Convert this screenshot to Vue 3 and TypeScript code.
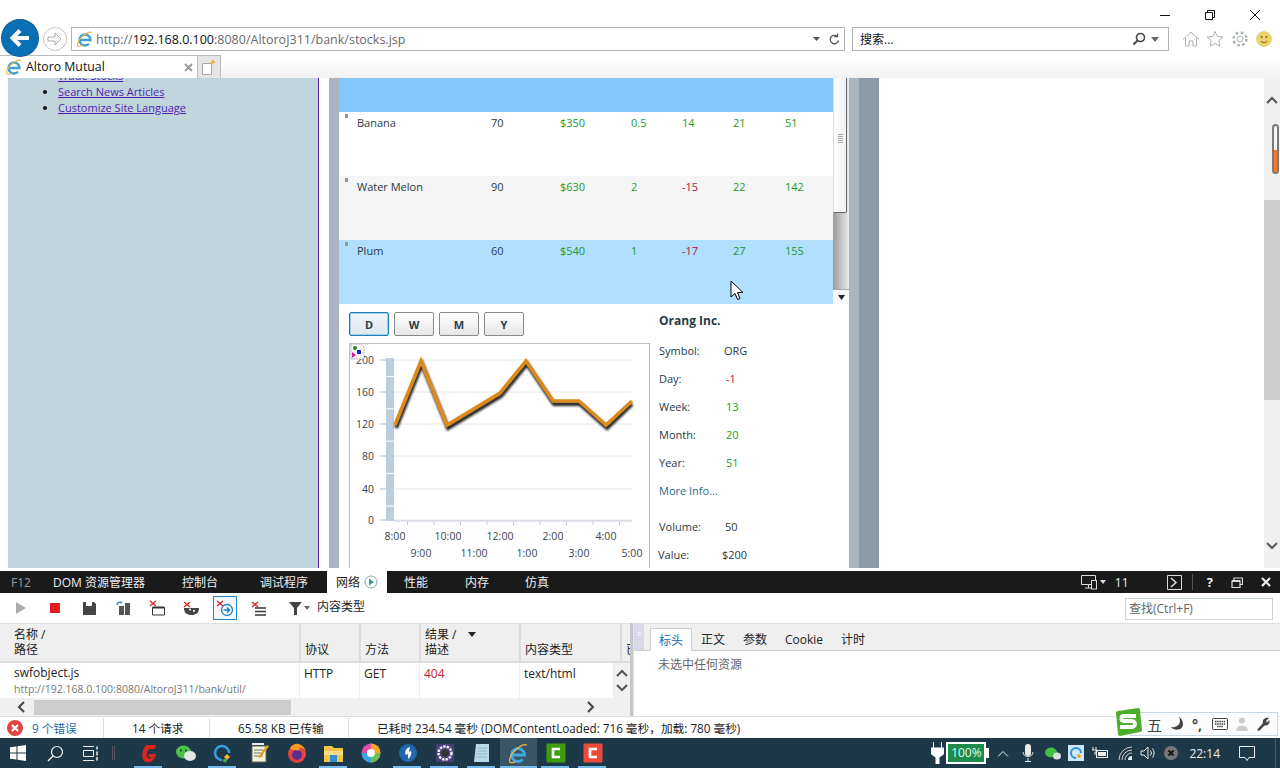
<script setup lang="ts">
interface Stock { name: string; qty: string; value: string; a: string; b: string; c: string; d: string; tone: string }
const stocks: Stock[] = [
  { name: 'Banana', qty: '70', value: '$350', a: '0.5', b: '14', c: '21', d: '51', tone: 'white' },
  { name: 'Water Melon', qty: '90', value: '$630', a: '2', b: '-15', c: '22', d: '142', tone: 'grey' },
  { name: 'Plum', qty: '60', value: '$540', a: '1', b: '-17', c: '27', d: '155', tone: 'blue' }
]
const isNeg = (v: string): boolean => v.startsWith('-')
const ranges: string[] = ['D', 'W', 'M', 'Y']
const facts = [
  { k: 'Symbol:', v: 'ORG', c: 'dark' },
  { k: 'Day:', v: '-1', c: 'neg' },
  { k: 'Week:', v: '13', c: 'pos' },
  { k: 'Month:', v: '20', c: 'pos' },
  { k: 'Year:', v: '51', c: 'pos' }
]
const yTicks = [
  { l: '200', y: 360 }, { l: '160', y: 392 }, { l: '120', y: 424 },
  { l: '80', y: 456 }, { l: '40', y: 489 }, { l: '0', y: 520 }
]
const xLabels = [
  { l: '8:00', x: 395, y: 540 }, { l: '9:00', x: 421, y: 557 }, { l: '10:00', x: 448, y: 540 },
  { l: '11:00', x: 474, y: 557 }, { l: '12:00', x: 500, y: 540 }, { l: '1:00', x: 527, y: 557 },
  { l: '2:00', x: 553, y: 540 }, { l: '3:00', x: 579, y: 557 }, { l: '4:00', x: 606, y: 540 },
  { l: '5:00', x: 632, y: 557 }
]
const linePts = '395,425 421,361 447,425 500,393 526,361 553,401 579,401 606,425 632,401'
const shadowPts = '396,428 422,364 448,428 501,396 527,364 554,404 580,404 607,428 632,404'
const tabs = [
  { t: 'DOM 资源管理器', w: 129 }, { t: '控制台', w: 78 }, { t: '调试程序', w: 67 }
]
const tabsAfter = [
  { t: '性能', w: 61 }, { t: '内存', w: 60 }, { t: '仿真', w: 60 }
]
</script>

<template>
  <div class="screen">
    <header class="browser">
      <div class="win-controls">
        <svg width="12" height="12" viewBox="0 0 12 12"><path d="M1 6.500h10" stroke="#111" fill="none"/></svg>
        <svg width="12" height="12" viewBox="0 0 12 12"><path d="M1.500 3.500h7v7h-7zM3.500 3.500v-2h7v7h-2" stroke="#111" fill="none"/></svg>
        <svg width="12" height="12" viewBox="0 0 12 12"><path d="M1 1l10 10M11 1L1 11" stroke="#111" fill="none"/></svg>
      </div>
      <div class="navrow">
        <button class="back">
          <svg width="26" height="26" viewBox="0 0 26 26"><path d="M22 13H6M13 5.500L5.500 13l7.500 7.500" stroke="#fff" stroke-width="4" fill="none"/></svg>
        </button>
        <button class="forward">
          <svg width="18" height="18" viewBox="0 0 18 18"><path d="M2 7h7V3l6 6-6 6v-4H2z" stroke="#a8a8a8" fill="none"/></svg>
        </button>
        <div class="address">
          <svg class="ie" width="18" height="18" viewBox="0 0 18 18"><path d="M4 10h10.500a5.500 5.500 0 1 0-1.500 3.800" fill="none" stroke="#3d9fdc" stroke-width="2.400"/><path d="M16 2.500C12 .5 3 8 1.500 14c-.5 3 3 2.500 5.500 1" stroke="#e9b93b" stroke-width="1.100" fill="none"/></svg>
          <span class="url"><i>http://</i><b>192.168.0.100</b><i>:8080/AltoroJ311/bank/stocks.jsp</i></span>
          <span class="addr-tools">
            <svg width="9" height="6" viewBox="0 0 9 6"><path d="M1 1h7L4.500 5z" fill="#555"/></svg>
            <svg width="13" height="13" viewBox="0 0 13 13"><path d="M10.500 7.500A4.200 4.200 0 1 1 9 3.200M9.500 0.500v3.200H6.300" stroke="#555" stroke-width="1.300" fill="none"/></svg>
          </span>
        </div>
        <div class="search">
          <span>搜索...</span>
          <span class="search-tools">
            <svg width="14" height="14" viewBox="0 0 14 14"><circle cx="8.500" cy="5.500" r="4" stroke="#444" stroke-width="1.600" fill="none"/><path d="M5.500 8.500L1.500 12.500" stroke="#444" stroke-width="2"/></svg>
            <svg width="8" height="5" viewBox="0 0 8 5"><path d="M0 0h8L4 5z" fill="#666"/></svg>
          </span>
        </div>
        <div class="ie-tools">
          <svg width="18" height="18" viewBox="0 0 18 18"><path d="M1 9.500L9 2l8 7.500M3.500 8v8h3.500v-5h4v5h3.500V8" stroke="#aab0b4" fill="none"/></svg>
          <svg width="18" height="18" viewBox="0 0 18 18"><path d="M9 1.500l2.300 5 5.500.6-4 3.700 1.100 5.400L9 13.500l-4.900 2.700 1.100-5.400-4-3.700 5.500-.6z" stroke="#aab0b4" fill="none"/></svg>
          <svg class="gear" width="18" height="18" viewBox="0 0 18 18"><circle cx="9" cy="9" r="3" stroke="#aab0b4" fill="none"/><circle cx="9" cy="9" r="6.500" stroke="#aab0b4" fill="none" stroke-width="2.400" stroke-dasharray="2.600 2.500"/></svg>
          <svg class="smile" width="16" height="16" viewBox="0 0 16 16"><circle cx="8" cy="8" r="7.500" fill="#eed36a" stroke="#d5ba52" stroke-width=".5"/><circle cx="5.500" cy="6" r="1" fill="#7a6a20"/><circle cx="10.500" cy="6" r="1" fill="#7a6a20"/><path d="M4.500 10c1.500 2 5.500 2 7 0" stroke="#7a6a20" fill="none"/></svg>
        </div>
      </div>
      <div class="tabrow">
        <div class="tab">
          <svg width="18" height="18" viewBox="0 0 18 18"><path d="M4 10h10.500a5.500 5.500 0 1 0-1.500 3.800" fill="none" stroke="#3d9fdc" stroke-width="2.400"/><path d="M16 2.500C12 .5 3 8 1.500 14c-.5 3 3 2.500 5.500 1" stroke="#e9b93b" stroke-width="1.100" fill="none"/></svg>
          <span class="tab-title">Altoro Mutual</span>
          <svg class="tab-close" width="9" height="9" viewBox="0 0 9 9"><path d="M1 1l7 7M8 1L1 8" stroke="#999" stroke-width="1.800"/></svg>
        </div>
        <div class="newtab">
          <svg width="16" height="17" viewBox="0 0 16 17"><path d="M1.500 4.500h9v11h-9z" fill="#fff" stroke="#aaa"/><path d="M12 0l.9 2.100L15 3l-2.100.9L12 6l-.9-2.100L9 3l2.100-.9z" fill="#f3b33b"/></svg>
        </div>
      </div>
    </header>

    <main class="page">
      <div class="page-left-margin"></div>
      <aside class="sidebar">
        <ul>
          <li><a>Trade Stocks</a></li>
          <li><a>Search News Articles</a></li>
          <li><a>Customize Site Language</a></li>
        </ul>
      </aside>
      <div class="gap"></div>
      <div class="gutter"></div>
      <section class="content">
        <div class="grid-wrap">
          <div class="stock-table">
            <div class="head-band"></div>
            <div v-for="s in stocks" :key="s.name" class="stock-row" :class="s.tone">
              <span class="bullet"></span>
              <span class="nm">{{ s.name }}</span>
              <span class="nm">{{ s.qty }}</span>
              <span class="pos">{{ s.value }}</span>
              <span class="pos">{{ s.a }}</span>
              <span :class="isNeg(s.b) ? 'neg' : 'pos'">{{ s.b }}</span>
              <span class="pos">{{ s.c }}</span>
              <span class="pos">{{ s.d }}</span>
            </div>
          </div>
          <div class="inner-scroll">
            <div class="inner-thumb"><i></i></div>
            <div class="inner-track"></div>
            <div class="inner-down"><svg width="7" height="5" viewBox="0 0 7 5"><path d="M0 0h7L3.500 5z" fill="#222"/></svg></div>
          </div>
          <svg class="cursor" width="14" height="21" viewBox="0 0 14 21"><path d="M1 1v16l4-3.500 2.500 6 2.500-1-2.500-6H13z" fill="#fff" stroke="#000"/></svg>
        </div>
        <div class="detail">
          <div class="chart-col">
            <div class="ranges">
              <button v-for="(r, i) in ranges" :key="r" class="range" :class="{ active: i === 0 }">{{ r }}</button>
            </div>
            <div class="chart-box">
              <svg class="chart" width="300" height="226" viewBox="350 344 300 226">
                <defs><filter id="soft" x="-5%" y="-10%" width="110%" height="120%"><feGaussianBlur stdDeviation="0.900"/></filter></defs>
                <line v-for="t in yTicks" :key="t.l" x1="386" x2="632" :y1="t.y" :y2="t.y" stroke="#e6e8ea"/>
                <line v-for="t in yTicks" :key="'m' + t.l" x1="380" x2="387" :y1="t.y" :y2="t.y" stroke="#aeb4c8"/>
                <rect x="386" y="358" width="8" height="163" fill="#bccddf"/>
                <line v-for="n in 6" :key="'w' + n" x1="386" x2="394" :y1="344 + n * 32.400" :y2="344 + n * 32.400" stroke="#fff"/>
                <line x1="394" x2="632" y1="521" y2="521" stroke="#c6c9dc"/>
                <line v-for="n in 9" :key="'x' + n" :x1="381 + n * 26.500" :x2="381 + n * 26.500" y1="521" y2="525" stroke="#c6c9dc"/>
                <polyline :points="shadowPts" fill="none" stroke="#222" stroke-width="4" filter="url(#soft)"/>
                <polyline :points="linePts" fill="none" stroke="#de8a1a" stroke-width="3.600"/>
                <text v-for="t in yTicks" :key="'l' + t.l" x="374" :y="t.y + 3.500" text-anchor="end" class="ct">{{ t.l }}</text>
                <text v-for="t in xLabels" :key="t.l" :x="t.x" :y="t.y" text-anchor="middle" class="ct">{{ t.l }}</text>
                <path d="M351 344h10l3 3v12h-13z" fill="#fff" stroke="#555" stroke-width=".6" stroke-dasharray="1 .6"/>
                <circle cx="355" cy="348" r="2" fill="#1a8a2c"/>
                <rect x="357" y="350" width="4" height="4" fill="#2222cc"/>
                <path d="M352 352l4 3-4 3z" fill="#e0189a"/>
              </svg>
            </div>
          </div>
          <div class="facts">
            <h3>Orang Inc.</h3>
            <div v-for="f in facts" :key="f.k" class="fact">
              <span class="fk">{{ f.k }}</span><span :class="f.c">{{ f.v }}</span>
            </div>
            <a class="more">More Info...</a>
            <div class="fact vol"><span class="fk2">Volume:</span><span class="dark">50</span></div>
            <div class="fact val"><span class="fk3">Value:</span><span class="dark">$200</span></div>
          </div>
        </div>
      </section>
      <div class="gutter"></div>
      <div class="gutter deep"></div>
      <div class="blank"></div>
      <div class="page-scroll">
        <svg class="chev" width="12" height="8" viewBox="0 0 12 8"><path d="M1 7l5-5 5 5" stroke="#555" stroke-width="2" fill="none"/></svg>
        <div class="mini"><i></i></div>
        <div class="page-thumb"></div>
        <svg class="chev low" width="12" height="8" viewBox="0 0 12 8"><path d="M1 1l5 5 5-5" stroke="#555" stroke-width="2" fill="none"/></svg>
      </div>
    </main>

    <section class="devtools">
      <div class="dt-top">
        <span class="f12">F12</span>
        <span v-for="t in tabs" :key="t.t" class="dt-tab" :style="{ width: t.w + 'px' }">{{ t.t }}</span>
        <span class="dt-active">网络
          <svg width="14" height="14" viewBox="0 0 14 14"><circle cx="7" cy="7" r="6" fill="#fff" stroke="#8aa"/><path d="M5 3.500l5 3.500-5 3.500z" fill="#2aa198"/></svg>
        </span>
        <span v-for="t in tabsAfter" :key="t.t" class="dt-tab" :style="{ width: t.w + 'px' }">{{ t.t }}</span>
        <span class="dt-right">
          <svg width="20" height="16" viewBox="0 0 20 16"><path d="M1.500 1.500h14v9h-14zM5 14h7M8.500 11v3" stroke="#ddd" fill="none"/><rect x="11.500" y="6.500" width="5" height="8.500" fill="#1a1a1a" stroke="#ddd"/></svg>
          <svg width="6" height="4" viewBox="0 0 6 4"><path d="M0 0h6L3 4z" fill="#ddd"/></svg>
          <span class="dt-num">11</span>
          <svg class="ico-prompt" width="15" height="15" viewBox="0 0 15 15"><path d="M.5.500h14v14H.5z" stroke="#ddd" fill="none"/><path d="M4 3l5 4.500L4 12" stroke="#ddd" stroke-width="1.500" fill="none"/></svg>
          <i class="dt-sep"></i>
          <b class="dt-q">?</b>
          <svg width="12" height="11" viewBox="0 0 12 11"><path d="M1 4h8v6.500H1zM3 3.500V1h8.500v6.500H9.500" stroke="#ddd" stroke-width="1.200" fill="none"/><path d="M1 4h8" stroke="#ddd" stroke-width="2"/></svg>
          <svg class="ico-x" width="10" height="10" viewBox="0 0 10 10"><path d="M1 1l8 8M9 1l-8 8" stroke="#eee" stroke-width="2.200"/></svg>
        </span>
      </div>
      <div class="dt-bar">
        <span class="tb"><svg width="12" height="14" viewBox="0 0 12 14"><path d="M1 1l10 6-10 6z" fill="#aaa"/></svg></span>
        <span class="tb"><svg width="10" height="10" viewBox="0 0 10 10"><rect width="10" height="10" fill="#e51c23"/></svg></span>
        <span class="tb"><svg width="13" height="13" viewBox="0 0 13 13"><path d="M0 0h3v4h6V0h2l2 2v11H0z" fill="#444"/></svg></span>
        <span class="tb"><svg width="16" height="16" viewBox="0 0 16 16"><path d="M2 5a3 3 0 0 1 5-2" stroke="#2a7ab8" stroke-width="1.400" fill="none"/><rect x="4" y="6" width="5" height="9" fill="#555"/><rect x="10" y="3" width="5" height="12" fill="#555"/></svg></span>
        <span class="tb"><svg width="16" height="16" viewBox="0 0 16 16"><path d="M3.500 7.500h12v7.500h-12z" stroke="#333" fill="none"/><path d="M3.500 7.500h12" stroke="#333" stroke-width="2"/><path d="M1 1l6 5M7 1L1 6" stroke="#d22" stroke-width="1.400"/></svg></span>
        <span class="tb"><svg width="17" height="15" viewBox="0 0 17 15"><path d="M1 7h15c0 5-3 7-7.500 7S1 12 1 7z" fill="#444"/><circle cx="7" cy="8.500" r="1" fill="#fff"/><circle cx="11" cy="10" r="1" fill="#fff"/><path d="M1 1l6 5M7 1L1 6" stroke="#d22" stroke-width="1.400"/></svg></span>
        <span class="tb on"><svg width="18" height="17" viewBox="0 0 18 17"><circle cx="11" cy="10" r="5.500" stroke="#1e7fc0" stroke-width="1.300" fill="none"/><path d="M7.500 10h6M11 7.500l2.500 2.500-2.500 2.500" stroke="#1e7fc0" stroke-width="1.400" fill="none"/><path d="M1 1l6 5M7 1L1 6" stroke="#d22" stroke-width="1.400"/></svg></span>
        <span class="tb"><svg width="16" height="15" viewBox="0 0 16 15"><path d="M4 7h11M4 10.500h11M4 14h11" stroke="#333" stroke-width="1.400"/><path d="M1 1l6 5M7 1L1 6" stroke="#d22" stroke-width="1.400"/></svg></span>
        <span class="filter">
          <svg width="13" height="13" viewBox="0 0 13 13"><path d="M0 0h13L8 6v7H5V6z" fill="#444"/></svg>
          <svg width="6" height="4" viewBox="0 0 6 4"><path d="M0 0h6L3 4z" fill="#666"/></svg>
        </span>
        <span class="ctype">内容类型</span>
        <span class="find">查找(Ctrl+F)</span>
      </div>
      <div class="dt-split">
        <div class="dt-left">
          <div class="hdr">
            <span class="h h1">名称 /<br>路径</span>
            <span class="h h2">协议</span>
            <span class="h h3">方法</span>
            <span class="h h4">结果 / <svg class="sort" width="8" height="5" viewBox="0 0 8 5"><path d="M0 0h8L4 5z" fill="#222"/></svg><br>描述</span>
            <span class="h h5">内容类型</span>
            <span class="h h6">已</span>
          </div>
          <div class="body-row">
            <div class="req">
              <span class="c1"><span class="fname">swfobject.js</span><span class="path">http://192.168.0.100:8080/AltoroJ311/bank/util/</span></span>
              <span class="c2">HTTP</span>
              <span class="c3">GET</span>
              <span class="c4">404</span>
              <span class="c5">text/html</span>
            </div>
            <div class="v-scroll">
              <svg width="12" height="8" viewBox="0 0 12 8"><path d="M1 7l5-5 5 5" stroke="#555" stroke-width="2" fill="none"/></svg>
              <svg width="12" height="8" viewBox="0 0 12 8"><path d="M1 1l5 5 5-5" stroke="#555" stroke-width="2" fill="none"/></svg>
            </div>
          </div>
          <div class="h-scroll">
            <svg class="ha" width="8" height="12" viewBox="0 0 8 12"><path d="M7 1L2 6l5 5" stroke="#444" stroke-width="2" fill="none"/></svg>
            <div class="h-thumb"></div>
            <svg class="hb" width="8" height="12" viewBox="0 0 8 12"><path d="M1 1l5 5-5 5" stroke="#444" stroke-width="2" fill="none"/></svg>
          </div>
        </div>
        <div class="splitter"></div>
        <div class="dt-right-pane">
          <div class="pane-tabs">
            <span class="collapse">&gt;</span>
            <span class="ptab act">标头</span>
            <span class="ptab p2">正文</span>
            <span class="ptab p3">参数</span>
            <span class="ptab p4">Cookie</span>
            <span class="ptab p5">计时</span>
          </div>
          <div class="none">未选中任何资源</div>
        </div>
      </div>
      <div class="status">
        <span class="st s1">
          <svg width="16" height="16" viewBox="0 0 16 16"><circle cx="8" cy="8" r="8" fill="#e04444"/><path d="M5 5l6 6M11 5l-6 6" stroke="#fff" stroke-width="2.200"/></svg>
          <em>9 个错误</em>
        </span>
        <span class="st s2">14 个请求</span>
        <span class="st s3">65.58 KB 已传输</span>
        <span class="st s4">已耗时 234.54 毫秒 (DOMContentLoaded: 716 毫秒，加载: 780 毫秒)</span>
      </div>
      <div class="ime">
        <svg class="ime-logo" width="28" height="28" viewBox="0 0 28 28"><path d="M2 5Q2 3 4 3L24 0Q26 0 26 2L28 22Q28 24 26 24L6 28Q4 28 4 26z" fill="#4caf2c"/><path d="M22 8H10c-3.500 0-3.500 5 0 5h8c4 0 4 6 0 6H6" stroke="#fff" stroke-width="3.800" fill="none"/></svg>
        <span class="ime-w">五</span>
        <svg width="14" height="14" viewBox="0 0 14 14"><path d="M9 0c3 6-1 11-8 10 3 4 12 4 12-3 0-3-2-6-4-7z" fill="#444"/></svg>
        <span class="ime-p">°,</span>
        <svg width="16" height="12" viewBox="0 0 16 12"><rect x=".5" y=".5" width="15" height="11" rx="1" fill="none" stroke="#444"/><path d="M3 3.500h10M3 6h10M5 8.500h6" stroke="#444" stroke-width="1.500" stroke-dasharray="1.500 .7"/></svg>
        <svg width="12" height="14" viewBox="0 0 12 14"><circle cx="6" cy="3.500" r="3" fill="#ccc"/><path d="M0 14c0-7 12-7 12 0z" fill="#ccc"/></svg>
        <svg width="14" height="14" viewBox="0 0 14 14"><path d="M1 13l6-7c-1-3 2-6 6-5L10 4l1 1.500L13.500 3c.5 4-2 6-5 5.500L3 14z" fill="#444"/></svg>
      </div>
    </section>

    <footer class="taskbar">
      <span class="tk w-start"><svg width="16" height="16" viewBox="0 0 16 16"><path d="M0 2.300L6.500 1.400V7.500H0zM7.500 1.200L16 0v7.500H7.500zM0 8.500h6.500v6.100L0 13.700zM7.500 8.500H16V16l-8.500-1.200z" fill="#fff"/></svg></span>
      <span class="tk w-search"><svg width="17" height="17" viewBox="0 0 17 17"><circle cx="10" cy="7" r="5.500" stroke="#fff" stroke-width="1.200" fill="none"/><path d="M6 11l-5 5" stroke="#fff" stroke-width="1.400"/></svg></span>
      <span class="tk w-view"><svg width="18" height="15" viewBox="0 0 18 15"><path d="M1 .5h11M1 14.500h11M1.500 4.500h10v6h-10z" stroke="#eee" fill="none"/><path d="M15 .500v3M15 5.500v4M15 11v3.500" stroke="#eee" stroke-width="1.500"/></svg></span>
      <i class="tk-sep"></i>
      <span class="app run"><svg width="18" height="20" viewBox="0 0 18 20"><path d="M16 2H7C2 5 1 15 4 18c4 3 11 1 12-7H9l-1 3h3c-1 2-3 2-4 0-1-3 1-8 3-8h5z" fill="#d8251d"/></svg></span>
      <span class="app"><svg width="20" height="17" viewBox="0 0 20 17"><ellipse cx="7.500" cy="7" rx="7.500" ry="6.500" fill="#4cc24b"/><ellipse cx="14" cy="11" rx="6" ry="5" fill="#e5e5e5"/><circle cx="5" cy="5.500" r="1" fill="#134"/><circle cx="10" cy="5.500" r="1" fill="#134"/></svg></span>
      <span class="app run"><svg width="19" height="19" viewBox="0 0 19 19"><path d="M9 2a7 7 0 1 0 0 14" stroke="#34a0e0" stroke-width="2.600" fill="none"/><path d="M9 2a7 7 0 0 1 7 7" stroke="#34a0e0" stroke-width="2.600" fill="none"/><path d="M11 13l3-3 3 3-3 3z" fill="#f1b82d"/><circle cx="12" cy="16.500" r="2" fill="#4aa94a"/></svg></span>
      <span class="app"><svg width="18" height="20" viewBox="0 0 18 20"><rect x="1" y="3" width="14" height="16" fill="#f3f3d8" stroke="#666"/><path d="M3 7h9M3 10h7M3 13h9" stroke="#777"/><path d="M7 14L16 2l2 1.500L9 15z" fill="#e2a128"/><path d="M1 1h12" stroke="#eee" stroke-width="2"/></svg></span>
      <span class="app"><svg width="20" height="20" viewBox="0 0 20 20"><circle cx="10" cy="11" r="9" fill="#e6433e"/><circle cx="10" cy="12" r="5" fill="#5a2c8c"/><path d="M3 5c2-3 5-5 9-4 3 1 6 4 7 7-2-3-5-4-7-3 2 2 0 3-4 2-2 0-4 0-5-2z" fill="#fa9a22"/></svg></span>
      <span class="app run"><svg width="19" height="17" viewBox="0 0 19 17"><path d="M0 1h8l2 2h9v14H0z" fill="#f4c445"/><path d="M0 6h19v4H0z" fill="#f9dc83"/><rect x="6" y="10" width="7" height="7" fill="#2d8ed1"/></svg></span>
      <span class="app"><svg width="20" height="20" viewBox="0 0 20 20"><circle cx="10" cy="10" r="9.500" fill="#e34ba8"/><path d="M10 .500a9.500 9.500 0 0 1 9.500 9.500H10z" fill="#f5a623"/><path d="M19.500 10A9.500 9.500 0 0 1 10 19.500V10z" fill="#6bc04b"/><path d="M10 19.500A9.500 9.500 0 0 1 .5 10H10z" fill="#3aa6e0"/><circle cx="10" cy="10" r="4" fill="#fff"/></svg></span>
      <span class="app run"><svg width="18" height="18" viewBox="0 0 18 18"><circle cx="9" cy="9" r="9" fill="#2068b0"/><path d="M11 3C7 4 5 8 7 11l2-1v5c3-2 4-6 3-8l-2 1z" fill="#fff"/></svg></span>
      <span class="app run"><svg width="20" height="20" viewBox="0 0 20 20"><rect x="1" y="1" width="18" height="18" fill="#4a3e78"/><circle cx="10" cy="10" r="6.500" fill="none" stroke="#eee" stroke-width="2.500" stroke-dasharray="2.500 1"/><circle cx="10" cy="10" r="3.500" fill="#333"/></svg></span>
      <span class="app run"><svg width="17" height="20" viewBox="0 0 17 20"><path d="M3 1h13v18H1z" fill="#b9d8e8"/><path d="M5 5h9M5 8h9M4 11h10M4 14h10" stroke="#8fb6cd"/></svg></span>
      <span class="app run active"><svg width="21" height="21" viewBox="0 0 21 21"><path d="M4 12h12.500a6.500 6.500 0 1 0-1.800 4.500" fill="none" stroke="#3fa9e8" stroke-width="2.800"/><path d="M19 2C14 0 3 9 1.500 17c-.5 3.500 3.500 3 6 1.500" stroke="#efbe3e" stroke-width="1.200" fill="none"/></svg></span>
      <span class="app run"><svg width="20" height="20" viewBox="0 0 20 20"><rect x=".5" y=".5" width="19" height="19" fill="#3f9d10"/><path d="M14 6H7v8h7" stroke="#fff" stroke-width="2.600" fill="none"/></svg></span>
      <span class="app run"><svg width="20" height="20" viewBox="0 0 20 20"><rect x=".5" y=".5" width="19" height="19" rx="1" fill="#ee4a3a"/><path d="M14 6H7v8h7" stroke="#fff" stroke-width="2.600" fill="none"/></svg></span>

      <span class="tray">
        <svg class="plug" width="13" height="22" viewBox="0 0 13 22"><path d="M2.500 0v7M10.500 0v7M0 6h13v4c0 3-3 4-5 5v7H5v-7c-2-1-5-2-5-5z" fill="#fff" stroke="#fff"/></svg>
        <span class="battery">100%</span>
        <span class="batcap"></span>
        <svg class="t1" width="12" height="7" viewBox="0 0 12 7"><path d="M1 6.500l5-5 5 5" stroke="#eee" fill="none"/></svg>
        <svg class="t2" width="12" height="18" viewBox="0 0 12 18"><rect x="3" y="0" width="6" height="12" rx="3" fill="#e8e8e8"/><path d="M1 8c0 6 10 6 10 0M6 14v3M3 17.500h6" stroke="#e8e8e8" fill="none"/></svg>
        <svg class="t3" width="16" height="13" viewBox="0 0 16 13"><ellipse cx="6" cy="5.500" rx="6" ry="5" fill="#3fc03f"/><ellipse cx="12" cy="9" rx="4" ry="3.500" fill="#ddd"/></svg>
        <svg class="t4" width="16" height="16" viewBox="0 0 16 16"><rect width="16" height="16" fill="#cfe8fb"/><path d="M8 3a5 5 0 1 0 0 10" stroke="#2e8fdc" stroke-width="2" fill="none"/><path d="M8 3a5 5 0 0 1 5 5" stroke="#2e8fdc" stroke-width="2" fill="none"/><circle cx="11" cy="11" r="2" fill="#eea92a"/></svg>
        <svg class="t5" width="16" height="12" viewBox="0 0 16 12"><rect x="4.500" y="3.500" width="11" height="7" fill="none" stroke="#eee"/><rect x="6" y="5" width="8" height="4" fill="#eee"/><path d="M1 0v3M4 0v3M0 3h5v2H3v3" stroke="#eee" fill="none"/></svg>
        <svg class="t6" width="14" height="14" viewBox="0 0 14 14"><path d="M1 14A13 13 0 0 1 14 1M4 14A10 10 0 0 1 14 4M7 14A7 7 0 0 1 14 7" stroke="#ccc" fill="none"/><path d="M10 14a4 4 0 0 1 4-4v4z" fill="#eee"/></svg>
        <svg class="t7" width="16" height="14" viewBox="0 0 16 14"><path d="M1 5h3l4-4v12L4 9H1z" stroke="#eee" fill="none"/><path d="M10.500 4.500a4 4 0 0 1 0 5M12.500 2.500a7 7 0 0 1 0 9" stroke="#eee" fill="none"/></svg>
        <svg class="t8" width="14" height="14" viewBox="0 0 14 14"><circle cx="7" cy="7" r="7" fill="#777"/><path d="M4.500 4.500l5 5M9.500 4.500l-5 5" stroke="#111" stroke-width="1.800"/></svg>
        <span class="clock">22:14</span>
        <svg class="t9" width="16" height="15" viewBox="0 0 16 15"><path d="M.5.500h15v11H10l-2 3-2-3H.5z" stroke="#eee" fill="none"/></svg>
        <i class="desk"></i>
      </span>
    </footer>
  </div>
</template>

<style>
html, body { margin: 0; overflow: hidden; background: #fff; }
</style>

<style scoped>
.screen { width: 1280px; height: 768px; display: flex; flex-direction: column; overflow: hidden; font-family: "Open Sans", "Noto Sans CJK SC", sans-serif; position: relative; color: #222; }
button { font-family: inherit; padding: 0; }

.browser { height: 78px; flex: none; background: linear-gradient(#fff 58px, #fff 60px, #f1f1f1 78px); position: relative; z-index: 2; }
.win-controls { height: 27px; display: flex; justify-content: flex-end; align-items: center; gap: 33px; padding-right: 19px; box-sizing: border-box; }
.win-controls svg { position: relative; top: 1px; }
.navrow { height: 24px; display: flex; align-items: center; position: relative; }
.back { position: absolute; left: 2px; top: -7px; width: 36px; height: 36px; border-radius: 50%; border: 0; background: #0a70b5; display: flex; align-items: center; justify-content: center; box-shadow: 0 0 0 1px #075a95; z-index: 2; }
.forward { position: absolute; left: 43px; top: 0; width: 24px; height: 24px; border: 1px solid #c4c4c4; background: #fff; border-radius: 50%; display: flex; align-items: center; justify-content: center; box-sizing: border-box; }
.address { margin-left: 71px; width: 774px; height: 24px; box-sizing: border-box; border: 1px solid #b3b3b3; display: flex; align-items: center; padding: 0 3px 0 4px; background: #fff; }
.ie { margin-right: 2px; flex: none; }
.url { font-size: 12.500px; white-space: nowrap; flex: 1; }
.url i { font-style: normal; color: #6a6a6a; }
.url b { font-weight: 400; color: #111; }
.addr-tools { display: flex; gap: 7px; align-items: center; }
.search { margin-left: 7px; width: 317px; height: 24px; box-sizing: border-box; border: 1px solid #b3b3b3; display: flex; align-items: center; justify-content: space-between; padding: 0 9px 0 7px; font-size: 12px; color: #111; background: #fff; }
.search-tools { display: flex; gap: 5px; align-items: center; }
.ie-tools { margin-left: 13px; display: flex; gap: 6px; align-items: center; }
.gear { margin-left: 1px; }
.smile { margin-left: 1px; }
.tabrow { display: flex; margin-top: 4px; height: 23px; }
.tab { width: 198px; height: 23px; box-sizing: border-box; background: #fff; border-top: 1px solid #bbb; border-right: 1px solid #bbb; display: flex; align-items: center; padding-left: 5px; position: relative; }
.tab-title { margin-left: 3px; font-size: 12.300px; color: #111; position: relative; top: -1px; }
.tab-close { margin-left: auto; margin-right: 4px; }
.newtab { width: 22px; height: 22px; background: #e6e6e6; border-top: 1px solid #bbb; border-right: 1px solid #bbb; display: flex; align-items: center; justify-content: center; }

.page { flex: none; height: 490px; display: flex; background: #fff; overflow: hidden; position: relative; }
.page-left-margin { width: 8px; flex: none; }
.sidebar { width: 310px; flex: none; background: #bfd4db; border-right: 1px solid #4b1f9a; overflow: hidden; }
.sidebar ul { margin: -10px 0 0; padding: 0 0 0 50px; font-size: 11px; line-height: 16px; }
.sidebar li { color: #111; }
.sidebar a { color: #4f1fae; text-decoration: underline; }
.gap { width: 10px; flex: none; }
.gutter { width: 10px; flex: none; background: #a9b5c0; }
.gutter.deep { width: 20px; background: #8a9aa8; }
.content { width: 510px; flex: none; display: flex; flex-direction: column; }
.grid-wrap { height: 226px; display: flex; flex: none; position: relative; }
.stock-table { width: 494px; flex: none; font-size: 11px; }
.head-band { height: 34px; background: #80c8ff; }
.stock-row { height: 64px; display: grid; grid-template-columns: 134px 69px 71px 51px 51px 52px 40px; padding: 3px 0 0 18px; box-sizing: border-box; line-height: 16px; position: relative; }
.stock-row.grey { background: #f5f5f5; }
.stock-row.blue { background: #b0dfff; }
.bullet { position: absolute; left: 6px; top: 2px; width: 3px; height: 4px; background: #8c98a0; }
.nm { color: #2a3a44; }
.pos { color: #1d9a2e; }
.neg { color: #b5123a; }
.dark { color: #2a3a44; }
.inner-scroll { width: 16px; flex: none; display: flex; flex-direction: column; background: linear-gradient(90deg, #9a9a9a, #ececec); }
.inner-thumb { height: 135px; box-sizing: border-box; background: linear-gradient(90deg, #fdfdfd, #f0f0f0); border-right: 1px solid #666; border-bottom: 1px solid #666; border-left: 1px solid #ddd; border-radius: 0 0 2px 2px; margin-right: 2px; display: flex; align-items: center; justify-content: center; }
.inner-thumb i { width: 5px; height: 10px; background: repeating-linear-gradient(#aaa 0 1px, transparent 1px 2px); position: relative; top: -6px; }
.inner-track { flex: 1; }
.inner-down { height: 15px; background: #f8f8f8; border-top: 1px solid #aaa; display: flex; align-items: center; justify-content: center; box-sizing: border-box; }
.cursor { position: absolute; left: 391px; top: 202px; }
.detail { flex: 1; display: flex; min-height: 0; }
.chart-col { width: 320px; flex: none; padding: 8px 0 0 10px; box-sizing: border-box; }
.ranges { display: flex; gap: 5px; height: 24px; margin-bottom: 7px; }
.range { width: 40px; height: 24px; border: 1px solid #8a8a8a; border-radius: 2px; background: linear-gradient(#fff, #e6e6e6); font-size: 11px; font-weight: 700; color: #2f3d48; }
.range.active { border: 1px solid #1d80b8; box-shadow: inset 0 0 0 1px #9dd0ee; background: linear-gradient(#eef6fb, #dfe8ee); }
.chart-box { width: 301px; height: 240px; box-sizing: border-box; border: 1px solid #bdbdbd; overflow: hidden; }
.chart { display: block; }
.ct { font-family: "Open Sans", sans-serif; font-size: 10.500px; fill: #3a4650; }
.facts { flex: 1; font-size: 11px; color: #2a3a44; }
.facts h3 { margin: 9px 0 0; font-size: 12px; line-height: 16px; font-weight: 700; color: #2a3a44; }
.fact { display: flex; height: 28px; align-items: center; }
.facts h3 + .fact { margin-top: 7px; }
.fk { width: 67px; }
.fact:first-of-type .fk { width: 65px; }
.fk2 { width: 66px; }
.fk3 { width: 64px; margin-left: -1px; }
.more { display: block; height: 28px; line-height: 30px; color: #1a6a8c; }
.vol { margin-top: 8px; }

.blank { flex: 1; }
.page-scroll { width: 16px; flex: none; background: #f0f0f0; display: flex; flex-direction: column; align-items: center; position: relative; }
.chev { position: absolute; top: 18px; left: 2px; }
.chev.low { top: 464px; }
.mini { position: absolute; left: 8px; top: 46px; width: 7px; height: 50px; box-sizing: border-box; border: 2px solid #7a7a7a; border-radius: 4px; background: #f6f6f6; display: flex; align-items: flex-end; justify-content: center; }
.mini i { width: 3px; height: 22px; background: #ee7b2d; }
.page-thumb { position: absolute; left: 0; top: 122px; width: 16px; height: 200px; background: #cdcdcd; }

.devtools { flex: none; height: 170px; display: flex; flex-direction: column; background: #fff; position: relative; }
.dt-top { margin-top: 3px; height: 22px; flex: none; background: #1a1a1a; display: flex; align-items: center; color: #eee; font-size: 12px; }
.f12 { color: #999; padding-left: 11px; width: 53px; box-sizing: border-box; flex: none; }
.dt-tab { display: inline-block; white-space: nowrap; flex: none; }
.dt-active { width: 60px; height: 22px; box-sizing: border-box; background: #fff; color: #222; display: flex; align-items: center; gap: 4px; padding-left: 9px; margin-right: 17px; flex: none; }
.dt-right { margin-left: auto; display: flex; align-items: center; padding-right: 9px; }
.dt-num { margin-left: 9px; width: 52px; }
.ico-prompt { margin-right: 10px; }
.dt-sep { width: 1px; height: 16px; background: #555; margin-right: 14px; }
.dt-q { font-size: 13px; margin-right: 18px; }
.ico-x { margin-left: 18px; }
.dt-bar { height: 30px; flex: none; display: flex; align-items: center; padding-left: 4px; box-sizing: border-box; }
.tb { width: 34px; height: 24px; display: flex; align-items: center; justify-content: center; box-sizing: border-box; flex: none; }
.tb.on { border: 1px solid #2a86c8; width: 24px; margin: 0 5px; background: #f2f8fc; }
.filter { margin-left: 13px; display: flex; align-items: center; gap: 2px; width: 28px; flex: none; }
.ctype { font-size: 12px; position: relative; top: -2px; }
.find { margin-left: auto; margin-right: 7px; width: 148px; height: 22px; box-sizing: border-box; border: 1px solid #c8d4dc; font-size: 12px; color: #666; line-height: 20px; padding-left: 3px; position: relative; top: 1px; }
.dt-split { height: 93px; flex: none; display: flex; }
.dt-left { width: 630px; flex: none; display: flex; flex-direction: column; overflow: hidden; }
.hdr { height: 40px; flex: none; background: #efefef; border-top: 1px solid #ddd; border-bottom: 2px solid #ddd; box-sizing: border-box; display: flex; font-size: 12px; line-height: 15px; }
.h { display: block; box-sizing: border-box; padding: 3px 0 0 4px; border-right: 2px solid #ddd; white-space: nowrap; flex: none; }
.h1 { width: 301px; padding-left: 14px; }
.h2, .h3 { width: 60px; padding-top: 18px; }
.h4 { width: 100px; }
.sort { margin-left: 8px; position: relative; top: -2px; }
.h5 { width: 101px; padding-top: 18px; }
.h6 { width: 10px; border: 0; padding-top: 18px; overflow: hidden; }
.body-row { height: 35px; flex: none; display: flex; }
.req { width: 613px; flex: none; display: flex; font-size: 12px; color: #222; }
.req > span { box-sizing: border-box; padding: 2px 0 0 4px; border-right: 1px solid #eee; }
.c1 { width: 300px; display: flex; flex-direction: column; padding-left: 14px !important; }
.fname { line-height: 16px; }
.path { font-size: 10.500px; color: #777; line-height: 14px; white-space: nowrap; margin-top: 1px; }
.c2, .c3 { width: 60px; }
.c4 { width: 100px; color: #c8202e; }
.c5 { flex: 1; border: 0 !important; }
.v-scroll { flex: 1; background: #f0f0f0; display: flex; flex-direction: column; align-items: center; justify-content: center; gap: 7px; padding-left: 1px; }
.h-scroll { height: 18px; flex: none; background: #f0f0f0; display: flex; align-items: center; }
.ha { margin-left: 17px; }
.h-thumb { margin-left: 9px; width: 257px; height: 15px; background: #cdcdcd; }
.hb { margin-left: 296px; }
.splitter { width: 4px; flex: none; background: #c6c6c6; border-right: 1px solid #e4e4e4; box-sizing: border-box; }
.dt-right-pane { flex: 1; min-width: 0; }
.pane-tabs { height: 28px; background: #efefef; border-top: 1px solid #ddd; border-bottom: 1px solid #ccc; box-sizing: border-box; display: flex; align-items: flex-end; font-size: 12px; }
.collapse { width: 10px; height: 26px; background: #d8d9e8; color: #fff; font-size: 9px; line-height: 20px; text-align: center; margin-right: 6px; align-self: flex-start; }
.ptab { display: block; height: 22px; line-height: 24px; white-space: nowrap; }
.ptab.act { width: 42px; height: 23px; margin-bottom: -1px; background: #fff; border: 1px solid #ccc; border-bottom: 0; box-sizing: border-box; text-align: center; color: #1a6aa8; }
.p2 { margin-left: 9px; }
.p3 { margin-left: 18px; }
.p4 { margin-left: 18px; }
.p5 { margin-left: 18px; }
.none { padding: 4px 0 0 24px; font-size: 12px; color: #666; }
.status { height: 22px; flex: none; border-top: 1px solid #ddd; box-sizing: border-box; display: flex; align-items: center; font-size: 11.700px; }
.st { height: 20px; line-height: 20px; box-sizing: border-box; white-space: nowrap; }
.s1 { width: 104px; padding-left: 7px; display: flex; align-items: center; border-right: 1px solid #ddd; }
.s1 em { font-style: normal; color: #1a6aa8; margin-left: 9px; }
.s2 { width: 106px; padding-left: 28px; border-right: 1px solid #ddd; }
.s3 { width: 139px; padding-left: 28px; border-right: 1px solid #ddd; }
.s4 { padding-left: 28px; }
.ime { position: absolute; left: 1130px; top: 144px; width: 148px; height: 24px; box-sizing: border-box; background: #fbfcfd; border: 1px solid #c6d6e2; display: flex; align-items: center; gap: 8px; padding-left: 16px; z-index: 3; }
.ime-logo { position: absolute; left: -17px; top: -5px; }
.ime-w { font-size: 15px; color: #444; }
.ime-p { font-size: 14px; font-weight: 700; color: #444; width: 12px; }

.taskbar { flex: 1; min-height: 30px; background: #1d3848; display: flex; align-items: center; color: #eee; }
.tk { height: 30px; display: flex; align-items: center; justify-content: center; flex: none; }
.w-start { width: 36px; }
.w-search { width: 38px; }
.w-view { width: 34px; }
.tk-sep { height: 14px; border-left: 1px solid #556; border-right: 1px solid #556; margin: 0 15px 0 4px; box-sizing: content-box; width: 1px; flex: none; }
.app { width: 37px; height: 30px; flex: none; display: flex; align-items: center; justify-content: center; position: relative; box-sizing: border-box; }
.app.run::after { content: ""; position: absolute; left: 4px; right: 5px; bottom: 0; height: 2px; background: #76b9ed; }
.app.active { background: #3a5566; }
.app.active::after { left: 0; right: 0; }
.tray { margin-left: auto; display: flex; align-items: center; position: relative; height: 30px; }
.plug { margin-right: 2px; }
.battery { width: 40px; height: 22px; box-sizing: border-box; border: 2px solid #fff; background: #1e8a4c; font-size: 12px; line-height: 18px; text-align: center; color: #dfe; }
.batcap { width: 3px; height: 10px; background: #fff; margin-right: 8px; }
.t2 { margin-left: 13px; }
.t3 { margin-left: 11px; }
.t4 { margin-left: 7px; }
.t5 { margin-left: 8px; }
.t6 { margin-left: 10px; }
.t7 { margin-left: 8px; }
.t8 { margin-left: 8px; }
.clock { font-size: 12px; margin-left: 11px; }
.t9 { margin-left: 19px; }
.desk { width: 1px; height: 30px; background: #4a5c68; margin-left: 20px; margin-right: 4px; }
</style>
